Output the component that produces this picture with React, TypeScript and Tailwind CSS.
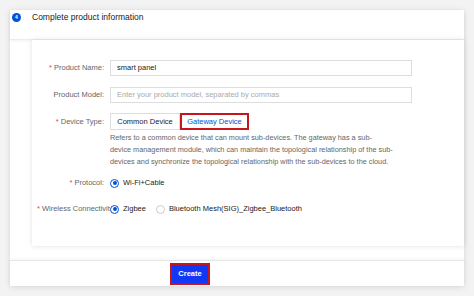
import React from 'react';

const font = { fontFamily: '"Liberation Sans", Arial, sans-serif' };

const descLines = [
  'Refers to a common device that can mount sub-devices. The gateway has a sub-',
  'device management module, which can maintain the topological relationship of the sub-',
  'devices and synchronize the topological relationship with the sub-devices to the cloud.',
];

function Label({ text, required = true }: { text: string; required?: boolean }) {
  return (
    <div className="w-[73px] shrink-0 overflow-hidden whitespace-nowrap pr-[6px] text-right text-[7.5px] text-[#666]">
      {required && <span className="mr-[2px] text-[#e54545]">*</span>}
      {text}:
    </div>
  );
}

function Radio({ label, checked }: { label: string; checked?: boolean }) {
  return (
    <div className="flex items-center gap-[4px]">
      <span
        className={`flex h-[9px] w-[9px] items-center justify-center rounded-full border bg-white ${
          checked ? 'border-[#0052d9]' : 'border-[#ccc]'
        }`}
      >
        {checked && <span className="h-[4px] w-[4px] rounded-full bg-[#0052d9]" />}
      </span>
      <span className="text-[7.5px] text-[#222]">{label}</span>
    </div>
  );
}

export default function App() {
  return (
    <div style={font} className="h-[296px] w-[474px] overflow-hidden bg-[#f3f3f3] px-[10px] pt-[10px]">
      <div className="flex h-[276px] w-[454px] flex-col bg-white shadow-[0_1px_6px_rgba(0,0,0,0.12)]">
        {/* header */}
        <div className="flex h-[30px] shrink-0 items-start border-b border-[#ececec] pt-[3px] shadow-[0_1px_3px_rgba(0,0,0,0.06)]">
          <div className="flex h-[9px] items-center">
            <span className="ml-[2px] flex h-[9px] w-[9px] shrink-0 items-center justify-center rounded-full bg-[#0052d9] text-[5px] font-bold leading-none text-white">
              4
            </span>
            <span className="ml-[11px] text-[8.5px] leading-none text-[#222]">Complete product information</span>
          </div>
        </div>

        {/* body */}
        <div className="flex-1 pl-[22px]">
          <div className="h-[206px] bg-white pl-[5px] pt-[20px] shadow-[0_0_5px_rgba(0,0,0,0.12)]">
            <div className="flex h-[16px] items-center">
              <Label text="Product Name" />
              <div className="flex h-[16px] w-[302px] items-center border border-[#ddd] px-[6px] text-[7.5px] text-[#222]">
                smart panel
              </div>
            </div>

            <div className="mt-[11px] flex h-[16px] items-center">
              <Label text="Product Model" required={false} />
              <div className="flex h-[16px] w-[302px] items-center border border-[#ddd] px-[6px] text-[7.5px] text-[#aaa]">
                Enter your product model, separated by commas
              </div>
            </div>

            <div className="mt-[10px] flex h-[17px] items-center">
              <Label text="Device Type" />
              <div className="flex h-[17px]">
                <div className="flex w-[70px] items-center justify-center border border-[#ddd] text-[7.5px] text-[#222]">
                  Common Device
                </div>
                <div className="flex w-[69px] items-center justify-center border-2 border-[#c4161c] text-[7.5px] text-[#0052d9]">
                  Gateway Device
                </div>
              </div>
            </div>

            <div className="ml-[73px] mt-[2px] text-[7.3px] leading-[12px] text-[#666]">
              {descLines.map((line) => (
                <div key={line} className="whitespace-nowrap">
                  {line}
                </div>
              ))}
            </div>

            <div className="mt-[9px] flex h-[12px] items-center">
              <Label text="Protocol" />
              <Radio label="Wi-Fi+Cable" checked />
            </div>

            <div className="mt-[14px] flex h-[12px] items-center">
              <div className="w-[73px] shrink-0 overflow-hidden whitespace-nowrap text-left text-[7.5px] text-[#666]">
                <span className="mr-[2px] text-[#e54545]">*</span>Wireless Connectivity:
              </div>
              <div className="flex items-center gap-[10px]">
                <Radio label="Zigbee" checked />
                <Radio label="Bluetooth Mesh(SIG)_Zigbee_Bluetooth" />
              </div>
            </div>
          </div>
        </div>

        {/* footer */}
        <div className="flex h-[26px] shrink-0 items-center border-t border-[#e6e6e6] pl-[160px] shadow-[0_-1px_3px_rgba(0,0,0,0.05)]">
          <button className="flex h-[22px] w-[40px] items-center justify-center border-2 border-[#c4161c] bg-[#1238f5] text-[7.5px] font-bold text-white">
            Create
          </button>
        </div>
      </div>
    </div>
  );
}
